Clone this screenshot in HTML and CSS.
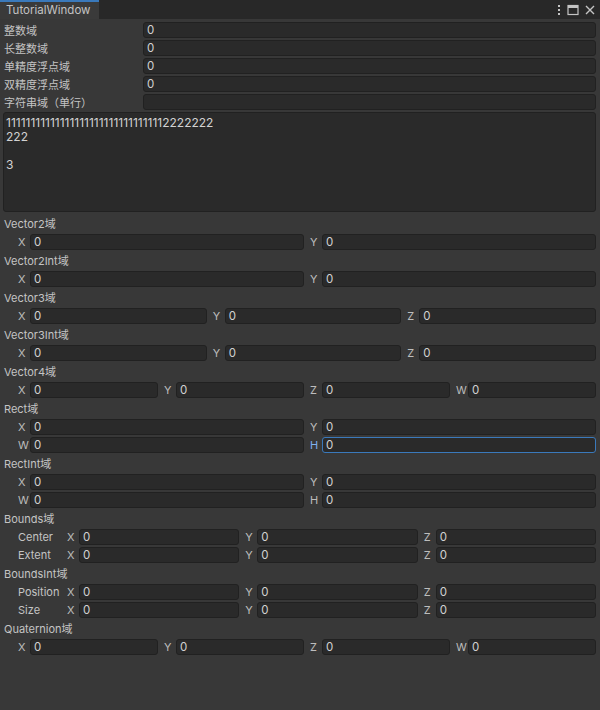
FILE: index.html
```html
<!DOCTYPE html>
<html lang="zh">
<head>
  <meta charset="UTF-8">
  <title>TutorialWindow</title>
  <link rel="stylesheet" href="styles.css">
</head>
<body>
  <div class="window">
    <div class="tab-bar">
      <div class="tab">TutorialWindow</div>
      <div class="tab-tools">
        <svg width="4" height="12" viewBox="0 0 4 12"><rect x="1" y="1" width="2" height="2" fill="#c4c4c4"/><rect x="1" y="5" width="2" height="2" fill="#c4c4c4"/><rect x="1" y="9" width="2" height="2" fill="#c4c4c4"/></svg>
        <svg width="12" height="12" viewBox="0 0 12 12"><rect x="1" y="1.5" width="10" height="9" fill="none" stroke="#c4c4c4" stroke-width="1.2"/><rect x="1" y="1.5" width="10" height="2.5" fill="#c4c4c4"/></svg>
        <svg width="10" height="10" viewBox="0 0 10 10"><path d="M1 1 L9 9 M9 1 L1 9" stroke="#c4c4c4" stroke-width="1.4"/></svg>
      </div>
    </div>

    <div class="content">
      <div class="field-row"><span class="label">整数域</span><div class="input">0</div></div>
      <div class="field-row"><span class="label">长整数域</span><div class="input">0</div></div>
      <div class="field-row"><span class="label">单精度浮点域</span><div class="input">0</div></div>
      <div class="field-row"><span class="label">双精度浮点域</span><div class="input">0</div></div>
      <div class="field-row"><span class="label">字符串域（单行）</span><div class="input"></div></div>

      <div class="text-area">111111111111111111111111111111112222222<br>222<br><br>3</div>

      <div class="group">
        <div class="group-label">Vector2域</div>
        <div class="vec cols-2">
          <div class="comp"><span>X</span><div class="input">0</div></div>
          <div class="comp"><span>Y</span><div class="input">0</div></div>
        </div>
      </div>

      <div class="group">
        <div class="group-label">Vector2Int域</div>
        <div class="vec cols-2">
          <div class="comp"><span>X</span><div class="input">0</div></div>
          <div class="comp"><span>Y</span><div class="input">0</div></div>
        </div>
      </div>

      <div class="group">
        <div class="group-label">Vector3域</div>
        <div class="vec cols-3">
          <div class="comp"><span>X</span><div class="input">0</div></div>
          <div class="comp"><span>Y</span><div class="input">0</div></div>
          <div class="comp"><span>Z</span><div class="input">0</div></div>
        </div>
      </div>

      <div class="group">
        <div class="group-label">Vector3Int域</div>
        <div class="vec cols-3">
          <div class="comp"><span>X</span><div class="input">0</div></div>
          <div class="comp"><span>Y</span><div class="input">0</div></div>
          <div class="comp"><span>Z</span><div class="input">0</div></div>
        </div>
      </div>

      <div class="group">
        <div class="group-label">Vector4域</div>
        <div class="vec cols-4">
          <div class="comp"><span>X</span><div class="input">0</div></div>
          <div class="comp"><span>Y</span><div class="input">0</div></div>
          <div class="comp"><span>Z</span><div class="input">0</div></div>
          <div class="comp"><span>W</span><div class="input">0</div></div>
        </div>
      </div>

      <div class="group">
        <div class="group-label">Rect域</div>
        <div class="vec cols-2">
          <div class="comp"><span>X</span><div class="input">0</div></div>
          <div class="comp"><span>Y</span><div class="input">0</div></div>
        </div>
        <div class="vec cols-2">
          <div class="comp"><span>W</span><div class="input">0</div></div>
          <div class="comp focused"><span>H</span><div class="input">0</div></div>
        </div>
      </div>

      <div class="group">
        <div class="group-label">RectInt域</div>
        <div class="vec cols-2">
          <div class="comp"><span>X</span><div class="input">0</div></div>
          <div class="comp"><span>Y</span><div class="input">0</div></div>
        </div>
        <div class="vec cols-2">
          <div class="comp"><span>W</span><div class="input">0</div></div>
          <div class="comp"><span>H</span><div class="input">0</div></div>
        </div>
      </div>

      <div class="group">
        <div class="group-label">Bounds域</div>
        <div class="sub-row">
          <span class="sub-label">Center</span>
          <div class="vec-inner cols-3">
            <div class="comp"><span>X</span><div class="input">0</div></div>
            <div class="comp"><span>Y</span><div class="input">0</div></div>
            <div class="comp"><span>Z</span><div class="input">0</div></div>
          </div>
        </div>
        <div class="sub-row">
          <span class="sub-label">Extent</span>
          <div class="vec-inner cols-3">
            <div class="comp"><span>X</span><div class="input">0</div></div>
            <div class="comp"><span>Y</span><div class="input">0</div></div>
            <div class="comp"><span>Z</span><div class="input">0</div></div>
          </div>
        </div>
      </div>

      <div class="group">
        <div class="group-label">BoundsInt域</div>
        <div class="sub-row">
          <span class="sub-label">Position</span>
          <div class="vec-inner cols-3">
            <div class="comp"><span>X</span><div class="input">0</div></div>
            <div class="comp"><span>Y</span><div class="input">0</div></div>
            <div class="comp"><span>Z</span><div class="input">0</div></div>
          </div>
        </div>
        <div class="sub-row">
          <span class="sub-label">Size</span>
          <div class="vec-inner cols-3">
            <div class="comp"><span>X</span><div class="input">0</div></div>
            <div class="comp"><span>Y</span><div class="input">0</div></div>
            <div class="comp"><span>Z</span><div class="input">0</div></div>
          </div>
        </div>
      </div>

      <div class="group">
        <div class="group-label">Quaternion域</div>
        <div class="vec cols-4">
          <div class="comp"><span>X</span><div class="input">0</div></div>
          <div class="comp"><span>Y</span><div class="input">0</div></div>
          <div class="comp"><span>Z</span><div class="input">0</div></div>
          <div class="comp"><span>W</span><div class="input">0</div></div>
        </div>
      </div>
    </div>
  </div>
</body>
</html>
```

FILE: styles.css
```css
body {
  margin: 0;
  background: #383838;
  font-family: Inter, "Noto Sans CJK SC", sans-serif;
  font-size: 11px;
  color: #c4c4c4;
}

.window {
  height: 710px;
  background: #383838;
  overflow: hidden;
}

/* tab strip */
.tab-bar {
  display: flex;
  align-items: stretch;
  height: 19px;
  background: #282828;
}

.tab {
  width: 99px;
  padding-left: 6px;
  background: #3a3a3a;
  border-top: 2px solid #3a79bb;
  box-sizing: border-box;
  line-height: 17px;
  font-size: 11.5px;
  color: #c4c4c4;
}

.tab-tools {
  margin-left: auto;
  display: flex;
  align-items: center;
  gap: 6px;
  padding-right: 5px;
}

/* fields */
.content {
  padding: 2px 4px 0 3px;
}

.field-row {
  display: flex;
  align-items: center;
  height: 18px;
}

.field-row .label {
  width: 139px;
  padding-left: 1px;
  flex-shrink: 0;
}

.input {
  flex: 1;
  min-width: 0;
  height: 16px;
  box-sizing: border-box;
  background: #2a2a2a;
  border: 1px solid #212121;
  border-radius: 3px;
  padding-left: 3px;
  line-height: 14px;
  font-size: 11.5px;
  color: #d2d2d2;
}

.text-area {
  height: 100px;
  box-sizing: border-box;
  margin: 1px 0 3px;
  padding: 3px 2px;
  background: #2a2a2a;
  border: 1px solid #212121;
  border-radius: 3px;
  line-height: 14px;
  font-size: 12px;
  color: #d2d2d2;
}

.group {
  margin-bottom: 1px;
}

.group-label {
  height: 18px;
  line-height: 18px;
  padding-left: 1px;
}

.vec {
  display: grid;
  gap: 4px;
  height: 18px;
  padding-left: 13px;
}

.vec-inner {
  display: grid;
  gap: 4px;
  flex: 1;
}

.cols-2 { grid-template-columns: 1fr 1fr; }
.cols-3 { grid-template-columns: 1fr 1fr 1fr; }
.cols-4 { grid-template-columns: 1fr 1fr 1fr 1fr; }

.comp {
  display: flex;
  align-items: center;
  min-width: 0;
}

.comp span {
  width: 12px;
  padding-left: 2px;
  flex-shrink: 0;
  color: #bdbdbd;
}

.comp.focused span {
  color: #7fb0f0;
}

.comp.focused .input {
  border-color: #3a79bb;
}

.sub-row {
  display: flex;
  align-items: center;
  height: 18px;
  padding-left: 13px;
}

.sub-label {
  width: 47px;
  padding-left: 2px;
  flex-shrink: 0;
}
```
